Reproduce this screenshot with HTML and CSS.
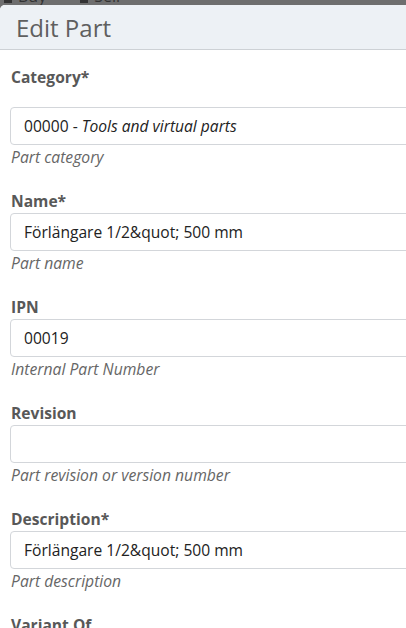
FILE: index.html
```html
<!DOCTYPE html>
<html>
<head>
<meta charset="utf-8">
<link rel="stylesheet" href="styles.css">
</head>
<body>
<div class="backdrop">
  <div class="nav">
    <span class="nav-item"><span class="nav-icon"></span>Buy <span class="caret">▾</span></span>
    <span class="nav-item"><span class="nav-icon dark"></span>Sell <span class="caret">▾</span></span>
  </div>
</div>
<div class="modal">
  <div class="modal-header">
    <h3 class="modal-title">Edit Part</h3>
  </div>
  <div class="modal-body">
    <div class="field first">
      <label class="label">Category*</label>
      <div class="input"><span>00000 - <em>Tools and virtual parts</em></span></div>
      <div class="help">Part category</div>
    </div>
    <div class="field">
      <label class="label">Name*</label>
      <div class="input"><span>Förlängare 1/2&amp;quot; 500 mm</span></div>
      <div class="help">Part name</div>
    </div>
    <div class="field">
      <label class="label">IPN</label>
      <div class="input"><span>00019</span></div>
      <div class="help">Internal Part Number</div>
    </div>
    <div class="field">
      <label class="label">Revision</label>
      <div class="input"><span></span></div>
      <div class="help">Part revision or version number</div>
    </div>
    <div class="field">
      <label class="label">Description*</label>
      <div class="input"><span>Förlängare 1/2&amp;quot; 500 mm</span></div>
      <div class="help">Part description</div>
    </div>
    <div class="field">
      <label class="label">Variant Of</label>
    </div>
  </div>
</div>
</body>
</html>
```
FILE: styles.css
```css
html, body {
  margin: 0;
  padding: 0;
  height: 100%;
  overflow: hidden;
  background: #6e6e6e;
  font-family: "Open Sans", "Noto Sans", sans-serif;
}
.backdrop {
  height: 5px;
  overflow: hidden;
  background: #6e6e6e;
}
.nav {
  display: flex;
  gap: 22px;
  margin-top: -13px;
  padding-left: 4px;
  font-size: 16px;
  line-height: 18px;
  color: #333;
}
.nav-item {
  display: flex;
  align-items: center;
  gap: 6px;
}
.nav-icon {
  width: 8px;
  height: 14px;
  background: #333;
}
.caret {
  font-size: 12px;
}
.modal {
  width: 520px;
  background: #fff;
  border-radius: 5px 5px 0 0;
  min-height: 700px;
}
.modal-header {
  height: 44px;
  background: #edf1f5;
  border-bottom: 1px solid #cdd1d5;
  border-radius: 5px 5px 0 0;
  display: flex;
  align-items: center;
  padding-left: 16px;
}
.modal-title {
  margin: 0;
  font-size: 24px;
  font-weight: 500;
  color: #5f5f5f;
  line-height: 30px;
  padding-top: 2px;
}
.modal-body {
  padding: 16px 0 0 10px;
}
.field {
  display: flex;
  flex-direction: column;
  margin-bottom: 22px;
}
.label {
  font-size: 15.6px;
  font-weight: 700;
  color: #585858;
  line-height: 22px;
  padding-left: 1px;
  margin-bottom: 1px;
}
.field.first .label {
  margin-bottom: 19px;
}
.input {
  height: 36px;
  border: 1px solid #d3d6da;
  border-radius: 4px;
  padding-left: 13px;
  display: flex;
  align-items: center;
  font-size: 15.6px;
  color: #222;
}
.input em {
  font-style: italic;
}
.help {
  font-size: 15.7px;
  font-style: italic;
  color: #666;
  line-height: 22px;
  padding-left: 1px;
  margin-top: 1px;
}
```
